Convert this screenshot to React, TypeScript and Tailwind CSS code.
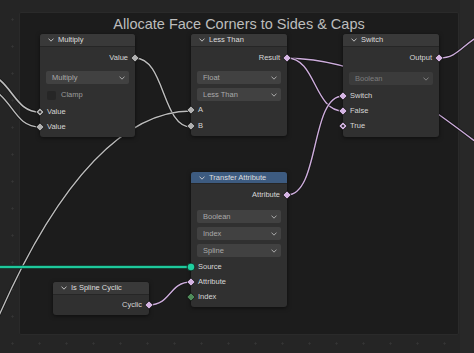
import React from 'react';

type Sock = 'gray' | 'grayDot' | 'pink' | 'pinkDot' | 'green' | 'teal';

function Socket({ kind }: { kind: Sock }) {
  if (kind === 'teal')
    return (
      <svg width="10" height="10" viewBox="0 0 10 10">
        <circle cx="5" cy="5" r="3.9" fill="#1fcf9f" stroke="#121212" strokeWidth="0.8" />
      </svg>
    );
  const fills: Record<string, string> = {
    gray: '#b0b0b0',
    grayDot: '#b0b0b0',
    pink: '#d4b4e2',
    pinkDot: '#d4b4e2',
    green: '#4f8a5a',
  };
  const dot = kind === 'grayDot' || kind === 'pinkDot';
  return (
    <svg width="10" height="10" viewBox="0 0 10 10">
      <polygon points="5,0.9 9.1,5 5,9.1 0.9,5" fill={fills[kind]} stroke="#141414" strokeWidth="0.8" />
      {dot && <rect x="3.9" y="3.9" width="2.2" height="2.2" transform="rotate(45 5 5)" fill="#262626" />}
    </svg>
  );
}

function Row({ label, side, kind, className }: { label: string; side: 'in' | 'out'; kind?: Sock; className: string }) {
  return (
    <div className={`relative flex items-center h-[14px] ${side === 'out' ? 'justify-end pr-[7px]' : 'pl-[7px]'} ${className}`}>
      <span className="leading-none">{label}</span>
      {kind && (
        <div className={`absolute top-[2px] w-[10px] h-[10px] ${side === 'out' ? 'right-[-5px]' : 'left-[-5px]'}`}>
          <Socket kind={kind} />
        </div>
      )}
    </div>
  );
}

function Dropdown({ label, className, dim }: { label: string; className: string; dim?: boolean }) {
  return (
    <div
      className={`mx-[6px] h-[13px] rounded-[2px] flex items-center justify-between pl-[6px] pr-[4px] ${dim ? 'bg-[#3b3b3b] text-[#7e7e7e]' : 'bg-[#414141] text-[#a9a9a9]'} ${className}`}
    >
      <span className="leading-none">{label}</span>
      <svg width="6" height="4" viewBox="0 0 6 4">
        <polyline points="0.5,0.6 3,3.2 5.5,0.6" fill="none" stroke={dim ? '#8a8a8a' : '#b4b4b4'} strokeWidth="0.9" />
      </svg>
    </div>
  );
}

function Header({ title, blue, h }: { title: string; blue?: boolean; h: string }) {
  return (
    <div
      className={`flex items-center gap-[4px] pl-[8px] rounded-t-[3px] border-b border-[#262626] ${h} ${blue ? 'bg-[#3d5b80]' : 'bg-[#393939]'} text-[#dedede]`}
    >
      <svg width="6" height="4" viewBox="0 0 6 4">
        <polyline points="0.5,0.6 3,3.2 5.5,0.6" fill="none" stroke="#cfcfcf" strokeWidth="0.9" />
      </svg>
      <span className="leading-none">{title}</span>
    </div>
  );
}

const nodeCls =
  'absolute bg-[#303030] rounded-[3px] shadow-[0_1px_4px_rgba(0,0,0,0.55)] text-[7.5px] text-[#d6d6d6]';

export default function App() {
  const wire = (d: string, color: string, w = 1.2) => (
    <g>
      <path d={d} fill="none" stroke="#0e0e0e" strokeOpacity="0.7" strokeWidth={w + 1.4} />
      <path d={d} fill="none" stroke={color} strokeWidth={w} />
    </g>
  );
  const gray = '#bdbdbd';
  const pink = '#cdaddc';
  return (
    <div
      className="relative w-[474px] h-[353px] overflow-hidden bg-[#252525] bg-[radial-gradient(circle,#353535_0.9px,transparent_1.2px)] bg-[length:27px_27px] bg-[position:-1px_6px]"
      style={{ fontFamily: '"Liberation Sans", Arial, sans-serif' }}
    >
      {/* frame */}
      <div className="absolute left-[19px] top-[12px] w-[440px] h-[323px] bg-[#1c1c1c] border border-[#2a2a2a] rounded-[2px] flex justify-center pt-[4px]">
        <span className="text-[14.5px] leading-none text-[#bdbdbd] h-[15px]">Allocate Face Corners to Sides &amp; Caps</span>
      </div>
      <div className="absolute left-[460px] top-0 w-[14px] h-[353px] bg-[#282828]" />

      {/* wires */}
      <svg className="absolute inset-0" width="474" height="353" viewBox="0 0 474 353">
        {wire('M -20 70 C 14 78, 12 112, 40 112', gray, 1.7)}
        {wire('M -18 85 C 14 94, 12 127, 40 127', gray, 1.4)}
        {wire('M 135 58 C 165 58, 162 127, 191 127', gray, 1.4)}
        {wire('M -8 332 C 60 170, 130 111, 191 111', gray, 1.3)}
        {wire('M 287 58 C 370 60, 420 100, 480 145', pink, 1.4)}
        {wire('M 287 58 C 316 58, 314 111, 343 111', pink, 1.4)}
        {wire('M 439 58 C 460 58, 462 42, 490 30', pink, 1.4)}
        {wire('M 287 195 C 320 195, 310 96, 343 96', pink, 1.4)}
        {wire('M 149 305 C 171 305, 169 282, 191 282', pink, 1.4)}
        <path d="M -5 267 L 191 267" stroke="#0e0e0e" strokeOpacity="0.6" strokeWidth="4" />
        <path d="M -5 267 L 191 267" stroke="#1ec89b" strokeWidth="2.6" />
      </svg>

      {/* Multiply */}
      <div className={`${nodeCls} left-[40px] top-[34px] w-[95px]`}>
        <Header title="Multiply" h="h-[13px]" />
        <div className="pt-[4px] pb-[3px] flex flex-col">
          <Row label="Value" side="out" kind="gray" className="" />
          <Dropdown label="Multiply" className="mt-[6px]" />
          <div className="mt-[4px] h-[14px] flex items-center pl-[7px] gap-[5px] text-[#9c9c9c]">
            <div className="w-[9px] h-[9px] rounded-[2px] bg-[#262626]" />
            <span className="leading-none">Clamp</span>
          </div>
          <Row label="Value" side="in" kind="grayDot" className="mt-[3px]" />
          <Row label="Value" side="in" kind="gray" className="mt-[1px]" />
        </div>
      </div>

      {/* Less Than */}
      <div className={`${nodeCls} left-[191px] top-[34px] w-[96px]`}>
        <Header title="Less Than" h="h-[13px]" />
        <div className="pt-[4px] pb-[3px] flex flex-col">
          <Row label="Result" side="out" kind="pink" className="" />
          <Dropdown label="Float" className="mt-[6px]" />
          <Dropdown label="Less Than" className="mt-[4px]" />
          <Row label="A" side="in" kind="gray" className="mt-[2px]" />
          <Row label="B" side="in" kind="gray" className="mt-[2px]" />
        </div>
      </div>

      {/* Switch */}
      <div className={`${nodeCls} left-[343px] top-[34px] w-[96px]`}>
        <Header title="Switch" h="h-[13px]" />
        <div className="pt-[4px] pb-[4px] flex flex-col">
          <Row label="Output" side="out" kind="pink" className="" />
          <Dropdown label="Boolean" className="mt-[7px]" dim />
          <Row label="Switch" side="in" kind="pink" className="mt-[4px]" />
          <Row label="False" side="in" kind="pink" className="mt-[1px]" />
          <Row label="True" side="in" kind="pinkDot" className="mt-[1px]" />
        </div>
      </div>

      {/* Transfer Attribute */}
      <div className={`${nodeCls} left-[191px] top-[172px] w-[96px]`}>
        <Header title="Transfer Attribute" blue h="h-[12px]" />
        <div className="pt-[4px] pb-[3px] flex flex-col">
          <Row label="Attribute" side="out" kind="pink" className="" />
          <Dropdown label="Boolean" className="mt-[8px]" />
          <Dropdown label="Index" className="mt-[4px]" />
          <Dropdown label="Spline" className="mt-[4px]" />
          <Row label="Source" side="in" kind="teal" className="mt-[3px]" />
          <Row label="Attribute" side="in" kind="pink" className="mt-[1px]" />
          <Row label="Index" side="in" kind="green" className="mt-[1px]" />
        </div>
      </div>

      {/* Is Spline Cyclic */}
      <div className={`${nodeCls} left-[53px] top-[282px] w-[96px]`}>
        <Header title="Is Spline Cyclic" h="h-[13px]" />
        <div className="pt-[3px] pb-[3px] flex flex-col">
          <Row label="Cyclic" side="out" kind="pink" className="" />
        </div>
      </div>
    </div>
  );
}
